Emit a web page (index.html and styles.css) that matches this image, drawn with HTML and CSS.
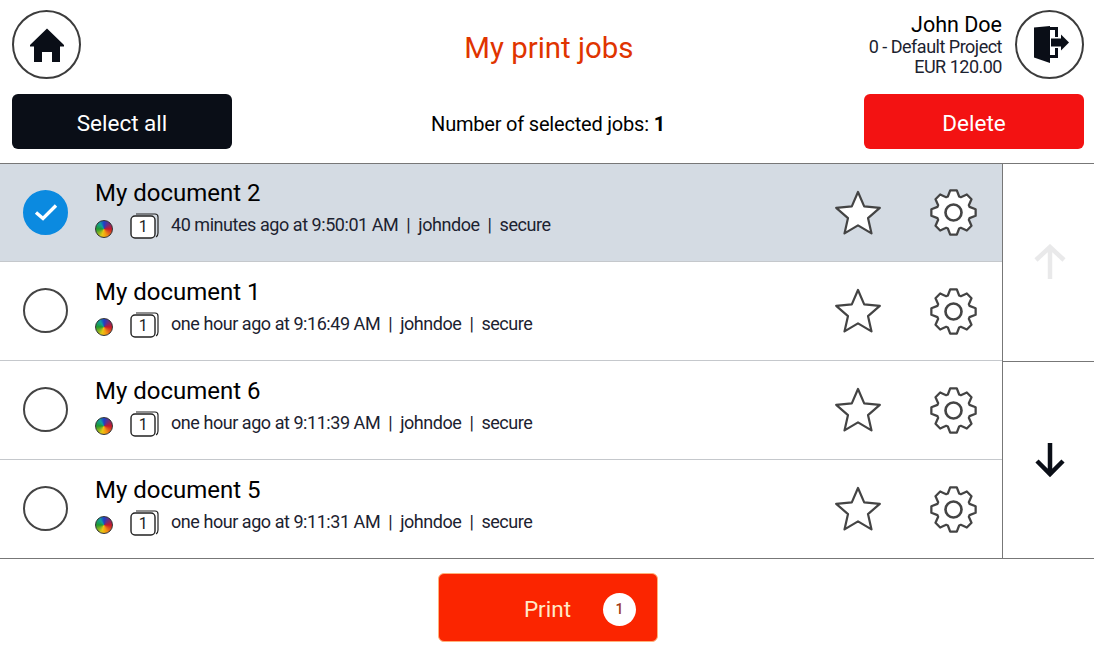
FILE: index.html
```html
<!DOCTYPE html>
<html lang="en">

<head>
    <meta charset="UTF-8">
    <title>My print jobs</title>
    <link rel="stylesheet" href="styles.css">
</head>

<body>
    <svg class="sprites" width="0" height="0">
        <symbol id="star" viewBox="0 0 48 48">
            <path d="M24 3 L30.2 17.4 L45.8 18.8 L34 29.1 L37.5 44.4 L24 36.4 L10.5 44.4 L14 29.1 L2.2 18.8 L17.8 17.4 Z" fill="#fff" stroke="#444" stroke-width="2.2" stroke-linejoin="round"/>
        </symbol>
        <symbol id="gear" viewBox="-26 -26 52 52">
            <path d="M-6 -17 L-3.5 -23.5 L3.5 -23.5 L6 -17 L7.78 -16.26 L14.14 -19.09 L19.09 -14.14 L16.26 -7.78 L17 -6 L23.5 -3.5 L23.5 3.5 L17 6 L16.26 7.78 L19.09 14.14 L14.14 19.09 L7.78 16.26 L6 17 L3.5 23.5 L-3.5 23.5 L-6 17 L-7.78 16.26 L-14.14 19.09 L-19.09 14.14 L-16.26 7.78 L-17 6 L-23.5 3.5 L-23.5 -3.5 L-17 -6 L-16.26 -7.78 L-19.09 -14.14 L-14.14 -19.09 L-7.78 -16.26 Z" fill="#fff" stroke="#444" stroke-width="2.4" stroke-linejoin="round"/>
            <circle r="8.5" fill="#fff" stroke="#444" stroke-width="2.8"/>
        </symbol>
        <symbol id="copies" viewBox="0 0 30 26">
            <path d="M6 1 H25 Q28 1 28 4 V20 Q28 23 26 24" fill="none" stroke="#222" stroke-width="1.2"/>
            <rect x="1" y="3" width="24" height="22" rx="4" fill="#fff" stroke="#222" stroke-width="1.4"/>
        </symbol>
    </svg>

    <header class="top-bar">
        <button class="round-btn">
            <svg width="34" height="34" viewBox="0 0 34 34">
                <path d="M17 0.5 L34 17 V18.5 H30 V34 H22 V24 H12 V34 H4 V18.5 H0 V17 Z" fill="#0a0e17"/>
            </svg>
        </button>
        <h1 class="page-title">My print jobs</h1>
        <div class="user-info">
            <div class="user-name">John Doe</div>
            <div class="user-line">0 - Default Project</div>
            <div class="user-line">EUR 120.00</div>
        </div>
        <button class="round-btn">
            <svg class="exit-icon" width="36" height="37" viewBox="0 0 36 37">
                <path d="M1 1.5 L17 0 V37 L1 31.5 Z" fill="#0a0e17"/>
                <path d="M17 2.5 H23.5 V11 M23.5 22 V30.5 H17" fill="none" stroke="#0a0e17" stroke-width="3"/>
                <path d="M18 12.5 H28 V8.5 L36 16.5 L28 24.5 V20.5 H18 Z" fill="#0a0e17"/>
            </svg>
        </button>
    </header>

    <div class="tool-bar">
        <button class="btn btn-dark">Select all</button>
        <p class="selected-count">Number of selected jobs: <b>1</b></p>
        <button class="btn btn-red">Delete</button>
    </div>

    <main class="jobs">
        <ul class="job-list">
            <li class="job selected">
                <span class="check">
                    <svg width="24" height="20" viewBox="0 0 24 20">
                        <path d="M2 10.5 L9 16.5 L22 3.5" fill="none" stroke="#fff" stroke-width="3.4"/>
                    </svg>
                </span>
                <div class="job-text">
                    <div class="job-name">My document 2</div>
                    <div class="job-meta">
                        <span class="color-dot"></span>
                        <span class="copies"><svg width="30" height="26"><use href="#copies"/></svg><i>1</i></span>
                        <span>40 minutes ago at 9:50:01 AM &nbsp;|&nbsp; johndoe &nbsp;|&nbsp; secure</span>
                    </div>
                </div>
                <svg class="star" width="48" height="48"><use href="#star"/></svg>
                <svg class="gear" width="49" height="49"><use href="#gear"/></svg>
            </li>
            <li class="job">
                <span class="check"></span>
                <div class="job-text">
                    <div class="job-name">My document 1</div>
                    <div class="job-meta">
                        <span class="color-dot"></span>
                        <span class="copies"><svg width="30" height="26"><use href="#copies"/></svg><i>1</i></span>
                        <span>one hour ago at 9:16:49 AM &nbsp;|&nbsp; johndoe &nbsp;|&nbsp; secure</span>
                    </div>
                </div>
                <svg class="star" width="48" height="48"><use href="#star"/></svg>
                <svg class="gear" width="49" height="49"><use href="#gear"/></svg>
            </li>
            <li class="job">
                <span class="check"></span>
                <div class="job-text">
                    <div class="job-name">My document 6</div>
                    <div class="job-meta">
                        <span class="color-dot"></span>
                        <span class="copies"><svg width="30" height="26"><use href="#copies"/></svg><i>1</i></span>
                        <span>one hour ago at 9:11:39 AM &nbsp;|&nbsp; johndoe &nbsp;|&nbsp; secure</span>
                    </div>
                </div>
                <svg class="star" width="48" height="48"><use href="#star"/></svg>
                <svg class="gear" width="49" height="49"><use href="#gear"/></svg>
            </li>
            <li class="job">
                <span class="check"></span>
                <div class="job-text">
                    <div class="job-name">My document 5</div>
                    <div class="job-meta">
                        <span class="color-dot"></span>
                        <span class="copies"><svg width="30" height="26"><use href="#copies"/></svg><i>1</i></span>
                        <span>one hour ago at 9:11:31 AM &nbsp;|&nbsp; johndoe &nbsp;|&nbsp; secure</span>
                    </div>
                </div>
                <svg class="star" width="48" height="48"><use href="#star"/></svg>
                <svg class="gear" width="49" height="49"><use href="#gear"/></svg>
            </li>
        </ul>

        <div class="scroller">
            <button class="scroll-btn">
                <svg width="32" height="36" viewBox="0 0 32 36">
                    <path d="M16 35 V3 M2 16 L16 3 L30 16" fill="none" stroke="#e9e9ea" stroke-width="4.5"/>
                </svg>
            </button>
            <button class="scroll-btn">
                <svg width="32" height="36" viewBox="0 0 32 36">
                    <path d="M16 1 V32 M3 19 L16 32 L29 19" fill="none" stroke="#0a0e17" stroke-width="4.5"/>
                </svg>
            </button>
        </div>
    </main>

    <footer class="bottom-bar">
        <button class="btn-print">
            <span>Print</span>
            <span class="badge">1</span>
        </button>
    </footer>
</body>

</html>
```

FILE: styles.css
```css
* {
    box-sizing: border-box;
}

body {
    margin: 0;
    height: 653px;
    overflow: hidden;
    background: #fff;
    color: #000;
    font-family: Roboto, Arial, sans-serif;
}

button {
    font-family: inherit;
    cursor: pointer;
}

.sprites {
    display: block;
    height: 0;
}

.top-bar {
    display: flex;
    align-items: flex-start;
    height: 94px;
    padding: 10px 10px 0 12px;
}

.round-btn {
    flex: none;
    display: flex;
    align-items: center;
    justify-content: center;
    width: 69px;
    height: 69px;
    padding: 0;
    background: #fff;
    border: 2px solid #3c3c3c;
    border-radius: 50%;
}

.exit-icon {
    margin-left: 3px;
}

.page-title {
    flex: 1;
    margin: 20px 0 0 0;
    padding-left: 148px;
    text-align: center;
    font-size: 29.4px;
    line-height: 36px;
    font-weight: 400;
    color: #e03400;
}

.user-info {
    margin: 3px 13px 0 0;
    text-align: right;
}

.user-name {
    font-size: 21.5px;
    line-height: 24px;
}

.user-line {
    font-size: 18px;
    line-height: 20px;
    color: #1c2230;
    letter-spacing: -0.5px;
}

.tool-bar {
    display: flex;
    align-items: center;
    justify-content: space-between;
    height: 69px;
    padding: 0 10px 14px 12px;
}

.btn {
    width: 220px;
    height: 55px;
    padding: 3px 0 0 0;
    border: none;
    border-radius: 6px;
    color: #fff;
    font-size: 22.5px;
}

.btn-dark {
    background: #0a0e17;
}

.btn-red {
    background: #f31212;
}

.selected-count {
    margin: 5px 0 0 0;
    font-size: 20px;
    letter-spacing: -0.2px;
}

.jobs {
    display: flex;
    height: 396px;
    border-top: 1px solid #777;
    border-bottom: 1px solid #777;
}

.job-list {
    flex: 1;
    margin: 0;
    padding: 0;
    list-style: none;
}

.job {
    display: flex;
    align-items: center;
    height: 99px;
    padding: 0 24px 0 23px;
    border-bottom: 1px solid #c5c8cc;
}

.job:first-child {
    height: 98px;
}

.job:last-child {
    height: 98px;
    border-bottom: none;
}

.job.selected {
    background: #d4dbe3;
}

.check {
    flex: none;
    display: flex;
    align-items: center;
    justify-content: center;
    width: 45px;
    height: 45px;
    margin-top: -1px;
    border: 2px solid #444;
    border-radius: 50%;
    background: #fff;
}

.selected .check {
    background: #0b8ae0;
    border-color: #0b8ae0;
}

.job-text {
    flex: 1;
    margin-left: 27px;
}

.job-name {
    font-size: 24px;
    line-height: 30px;
    margin-top: -8px;
}

.job-meta {
    display: flex;
    align-items: center;
    margin-top: 3px;
    font-size: 18px;
    line-height: 24px;
    color: #1c2230;
    letter-spacing: -0.45px;
}

.color-dot {
    flex: none;
    width: 18px;
    height: 18px;
    margin-top: 7px;
    border-radius: 50%;
    border: 1px solid #333;
    background: conic-gradient(#1e3fc8, #c8182a 25%, #f59a10 45%, #e8c814 55%, #1f9a30 75%, #10a0a0 90%, #1e3fc8);
}

.copies {
    position: relative;
    flex: none;
    width: 30px;
    height: 26px;
    margin: 2px 11px 0 17px;
}

.copies svg {
    display: block;
}

.copies i {
    position: absolute;
    left: 1px;
    top: 4px;
    width: 24px;
    text-align: center;
    font-style: normal;
    font-size: 16px;
    line-height: 20px;
    color: #222;
}

.star {
    flex: none;
    margin-right: 47px;
}

.gear {
    flex: none;
}

.scroller {
    flex: none;
    display: flex;
    flex-direction: column;
    width: 92px;
    border-left: 1px solid #777;
}

.scroll-btn {
    flex: 1;
    display: flex;
    align-items: center;
    justify-content: center;
    padding: 0 0 0 3px;
    background: #fff;
    border: none;
}

.scroll-btn:first-child {
    border-bottom: 1px solid #777;
}

.bottom-bar {
    display: flex;
    justify-content: center;
    padding: 14px 0 0 2px;
}

.btn-print {
    display: flex;
    align-items: center;
    justify-content: flex-end;
    gap: 32px;
    width: 220px;
    height: 69px;
    padding: 3px 21px 0 0;
    background: #fb2500;
    border: 1px solid #ffb27a;
    border-radius: 6px;
    color: #ffe9c8;
    font-size: 22.5px;
}

.badge {
    display: flex;
    align-items: center;
    justify-content: center;
    width: 33px;
    height: 33px;
    border-radius: 50%;
    background: #fff;
    color: #a03a1a;
    font-size: 14px;
    font-weight: 500;
}
```
